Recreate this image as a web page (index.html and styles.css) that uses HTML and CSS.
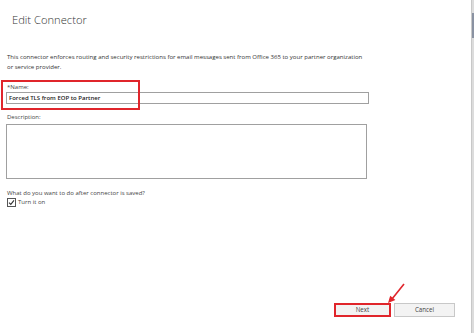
FILE: index.html
```html
<!DOCTYPE html>
<html>
<head>
<meta charset="utf-8">
<link rel="stylesheet" href="styles.css">
</head>
<body>
<div class="page">
  <h1 class="title">Edit Connector</h1>
  <p class="intro">This connector enforces routing and security restrictions for email messages sent from Office 365 to your partner organization or service provider.</p>
  <div class="field name-field">
    <div class="label">*Name:</div>
    <div class="textbox">Forced TLS from EOP to Partner</div>
    <div class="highlight name-highlight"></div>
  </div>
  <div class="field">
    <div class="label">Description:</div>
    <div class="textarea"></div>
  </div>
  <div class="field question">
    <div class="label">What do you want to do after connector is saved?</div>
    <div class="check-row">
      <svg class="checkbox" width="9" height="9" viewBox="0 0 9 9"><rect x="0.5" y="0.5" width="8" height="8" fill="#fff" stroke="#555"/><path d="M2 4.6 L3.8 6.4 L7 2.4" fill="none" stroke="#333" stroke-width="1.1"/></svg>
      <span class="label">Turn it on</span>
    </div>
  </div>
  <div class="actions">
    <div class="btn next">Next<div class="highlight btn-highlight"></div>
      <svg class="arrow" width="22" height="24" viewBox="0 0 22 24"><path d="M18 2 L6 17" stroke="#e0252b" stroke-width="1.6" fill="none"/><path d="M2 21 L4.2 13.8 L9.4 18 Z" fill="#e0252b"/></svg>
    </div>
    <div class="btn cancel">Cancel</div>
  </div>
  <div class="scrollbar"><div class="thumb"></div></div>
</div>
</body>
</html>
```
FILE: styles.css
```css
* { box-sizing: border-box; }
html, body { margin: 0; padding: 0; background: #fff; }
body { font-family: "Open Sans", "Noto Sans", sans-serif; color: #333; }
.page {
  position: relative;
  width: 474px;
  height: 333px;
  display: flex;
  flex-direction: column;
  padding: 0 0 0 6px;
  overflow: hidden;
}
.title {
  margin: 12px 0 0 6px;
  font-size: 11.2px;
  line-height: 16px;
  font-weight: 300;
  color: #333;
}
.intro {
  margin: 24px 0 0 1px;
  width: 360px;
  font-size: 6.05px;
  line-height: 10px;
  color: #333;
}
.field { position: relative; display: flex; flex-direction: column; }
.name-field { margin-top: 11px; }
.label {
  font-size: 6px;
  line-height: 9px;
  color: #444;
  margin-left: 1px;
}
.textbox {
  width: 363px;
  height: 12px;
  border: 1px solid #a0a0a0;
  font-size: 6px;
  line-height: 10px;
  font-weight: 600;
  color: #1a1a1a;
  padding-left: 2px;
}
.field + .field { margin-top: 9px; }
.textarea {
  width: 361px;
  height: 55px;
  margin-top: 2px;
  border: 1px solid #a0a0a0;
}
.question { margin-top: 10px !important; }
.check-row {
  display: flex;
  align-items: center;
  gap: 2px;
  margin-top: 0;
  margin-left: 1px;
}
.checkbox { display: block; }
.check-row .label { margin-left: 0; }
.highlight {
  position: absolute;
  border: 2px solid #e0252b;
  pointer-events: none;
}
.name-highlight { left: -5px; top: -3px; width: 139px; height: 30px; }
.actions {
  margin-top: auto;
  margin-bottom: 16px;
  margin-right: 19px;
  display: flex;
  justify-content: flex-end;
  gap: 3px;
}
.btn {
  position: relative;
  height: 14px;
  border: 1px solid #c8c8c8;
  background: #f3f3f3;
  font-size: 6.2px;
  line-height: 12px;
  text-align: center;
  color: #444;
}
.next { width: 57px; }
.cancel { width: 61px; }
.btn-highlight { left: -1px; top: -1px; width: 57px; height: 14px; }
.arrow { position: absolute; left: 51px; top: -22px; }
.scrollbar {
  position: absolute;
  right: 0;
  top: 0;
  width: 3px;
  height: 333px;
  background: #dcdcdc;
  border-left: 1px solid #c8c8c8;
}
.thumb {
  position: absolute;
  top: 13px;
  left: 0;
  width: 2px;
  height: 25px;
  background: #8a92a2;
}
```
